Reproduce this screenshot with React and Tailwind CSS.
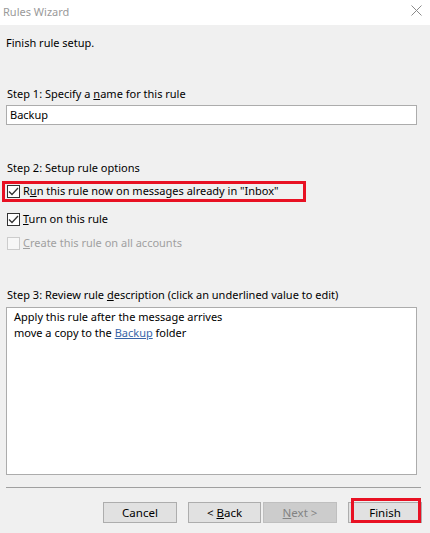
import React from 'react';

const font = { fontFamily: '"Segoe UI", "Noto Sans", sans-serif' };

function CheckBox({ checked, disabled }) {
  return (
    <span
      className={
        'inline-flex w-[13px] h-[13px] shrink-0 items-center justify-center border ' +
        (disabled ? 'border-[#cccccc] bg-[#f7f7f7]' : 'border-[#333333] bg-white')
      }
    >
      {checked && (
        <svg width="11" height="11" viewBox="0 0 11 11">
          <polyline points="1,5.5 4,8.5 10,2" fill="none" stroke="#333333" strokeWidth="1.3" />
        </svg>
      )}
    </span>
  );
}

function Button({ children, disabled, className = '' }) {
  return (
    <div
      className={
        'h-[21px] flex items-center justify-center border text-[11.5px] ' +
        (disabled
          ? 'bg-[#cccccc] border-[#bfbfbf] text-[#838383]'
          : 'bg-[#e1e1e1] border-[#adadad] text-black') +
        ' ' +
        className
      }
    >
      {children}
    </div>
  );
}

export default function App() {
  return (
    <div className="w-[430px] h-[533px] bg-[#f0f0f0] flex flex-col text-[11px] text-black overflow-hidden" style={font}>
      {/* title bar */}
      <div className="h-[25px] bg-white flex items-center justify-between shrink-0">
        <span className="pl-[3px] text-[11px] text-[#9a9a9a]">Rules Wizard</span>
        <svg width="11" height="11" viewBox="0 0 11 11" className="mr-[8px] mb-[4px]">
          <path d="M0.5 0.5 L10.5 10.5 M10.5 0.5 L0.5 10.5" stroke="#8a8a8a" strokeWidth="1" />
        </svg>
      </div>

      <div className="px-[6px] flex flex-col">
        <div className="mt-[10px] leading-[16px]">Finish rule setup.</div>

        <div className="mt-[35px] leading-[16px] pl-px">
          Step 1: Specify a <span className="underline">n</span>ame for this rule
        </div>
        <div className="mt-[3px] h-[20px] w-[411px] bg-white border border-[#acacac] flex items-center pl-[3px] leading-[16px]">
          Backup
        </div>

        <div className="mt-[35px] leading-[16px] pl-px">Step 2: Setup rule options</div>

        {/* option 1 with red annotation */}
        <div className="relative mt-[7px] h-[16px] flex items-center gap-[3px] pl-px">
          <CheckBox checked />
          <span>
            R<span className="underline">u</span>n this rule now on messages already in "Inbox"
          </span>
          <div className="absolute left-[-4px] top-[-2px] w-[304px] h-[21px] border-[3px] border-[#e81123] pointer-events-none" />
        </div>

        <div className="mt-[12px] h-[16px] flex items-center gap-[3px] pl-px">
          <CheckBox checked />
          <span>
            <span className="underline">T</span>urn on this rule
          </span>
        </div>

        <div className="mt-[8px] h-[16px] flex items-center gap-[3px] pl-px text-[#a0a0a0]">
          <CheckBox disabled />
          <span>
            <span className="underline">C</span>reate this rule on all accounts
          </span>
        </div>

        <div className="mt-[36px] leading-[16px] pl-px">
          Step 3: Review rule <span className="underline">d</span>escription (click an underlined value to edit)
        </div>
        <div className="mt-[4px] h-[168px] w-[411px] bg-white border border-[#acacac] px-[7px] pt-px leading-[16px]">
          <div>Apply this rule after the message arrives</div>
          <div>
            move a copy to the <span className="underline text-[#3765a8]">Backup</span> folder
          </div>
        </div>

        <div className="mt-[12px] h-px w-[415px] bg-[#a0a0a0]" />

        <div className="mt-[14px] flex items-center">
          <Button className="ml-[97px] w-[74px]">Cancel</Button>
          <Button className="ml-[11px] w-[73px]">
            &lt; <span className="underline ml-[3px]">B</span>ack
          </Button>
          <Button disabled className="ml-[2px] w-[74px]">
            <span className="underline">N</span>ext &gt;
          </Button>
          <div className="relative ml-[11px]">
            <Button className="w-[74px]">Finish</Button>
            <div className="absolute left-[3px] top-[-4px] w-[70px] h-[25px] border-[3px] border-[#e81123] pointer-events-none" />
          </div>
        </div>
      </div>
    </div>
  );
}
